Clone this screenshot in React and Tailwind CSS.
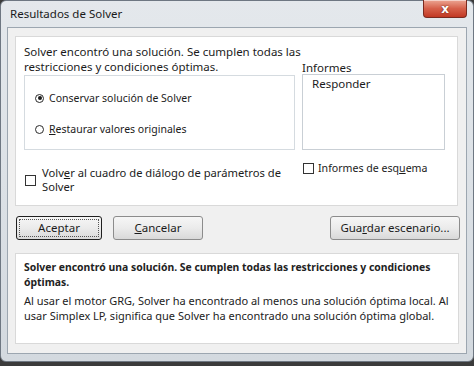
import React from 'react'

const font = { fontFamily: '"Noto Sans", "Open Sans", sans-serif' }

function Radio({ checked }) {
  return (
    <span className="relative inline-flex h-[9px] w-[9px] shrink-0 items-center justify-center rounded-full border border-[#2b2b2b] bg-white">
      {checked ? <span className="h-[4px] w-[4px] rounded-full bg-[#1a1a1a]" /> : null}
    </span>
  )
}

function Checkbox() {
  return <span className="inline-block h-[11px] w-[11px] shrink-0 border border-[#333] bg-white" />
}

function Button({ children, className = '', isDefault = false }) {
  return (
    <div
      className={`flex h-[24px] items-center justify-center rounded-[3px] border bg-gradient-to-b from-[#f6f6f6] via-[#ebebeb] to-[#d9d9d9] text-[11.5px] text-[#1b1b1b] ${
        isDefault ? 'border-[#1f1f1f] p-[2px]' : 'border-[#8c8c8c]'
      } ${className}`}
    >
      {isDefault ? (
        <div className="flex h-full w-full items-center justify-center border border-dotted border-[#555]">{children}</div>
      ) : (
        children
      )}
    </div>
  )
}

export default function App() {
  return (
    <div className="h-[366px] w-[474px] overflow-hidden bg-[#3b3b3b] text-[#1b1b1b]" style={font}>
      <div className="flex h-[362px] w-[474px] flex-col rounded-[6px] border border-[#6e7782] bg-gradient-to-b from-[#e4e8ec] via-[#dce1e6] to-[#d3d9df] px-[6px] pb-[7px]">
        {/* title bar */}
        <div className="flex h-[26px] shrink-0 items-start justify-between">
          <span className="pl-[3px] pt-[6px] text-[11.5px] leading-[14px] text-[#1a1a1a]">Resultados de Solver</span>
          <div className="-mt-px flex h-[18px] w-[44px] items-center justify-center rounded-b-[4px] border border-t-0 border-[#7a2a1f] bg-gradient-to-b from-[#eba593] via-[#d6604a] to-[#c13823] shadow-[inset_0_1px_0_rgba(255,255,255,0.5)]">
            <span className="text-[12px] font-bold leading-none text-white [text-shadow:0_0_2px_#5a1a10]" style={{ fontFamily: '"DejaVu Sans", sans-serif' }}>
              x
            </span>
          </div>
        </div>

        {/* client area */}
        <div className="flex flex-1 flex-col border border-[#9ca6b0] bg-[#f0f0f0] px-[7px] pt-[8px]">
          {/* upper white panel */}
          <div className="flex h-[170px] w-[443px] flex-col border border-[#d9d9d9] bg-white pl-[8px] pt-[7px]">
            <div className="flex items-end">
              <div className="w-[271px]">
                <p className="text-[11.5px] leading-[15px] whitespace-nowrap">
                  Solver encontró una solución. Se cumplen todas las
                  <br />
                  restricciones y condiciones óptimas.
                </p>
                <div className="mt-px flex h-[75px] flex-col border border-[#d5dbe0] pl-[10px] pt-[15px]">
                  <div className="flex items-center gap-[5px] text-[10.5px] leading-[14px]">
                    <Radio checked />
                    <span>Conservar solución de Solver</span>
                  </div>
                  <div className="mt-[17px] flex items-center gap-[5px] text-[10.5px] leading-[14px]">
                    <Radio />
                    <span>
                      <span className="underline">R</span>estaurar valores originales
                    </span>
                  </div>
                </div>
              </div>
              <div className="ml-[7px] w-[143px]">
                <div className="text-[11.5px] leading-[15px]">Informes</div>
                <div className="mt-[-1px] h-[76px] border border-[#c9cfd5] pl-[9px] pt-[1px] text-[11.5px] leading-[15px]">
                  Responder
                </div>
              </div>
            </div>
            <div className="flex items-start">
              <div className="mt-[16px] flex w-[271px] items-center gap-[6px] pl-px">
                <Checkbox />
                <span className="w-[250px] text-[11.2px] leading-[14px]">
                  Volv<span className="underline">e</span>r al cuadro de diálogo de parámetros de
                  <br />
                  Solver
                </span>
              </div>
              <div className="ml-[8px] mt-[11px] flex items-center gap-[4px]">
                <Checkbox />
                <span className="text-[10.6px] leading-[15px]">
                  Informes de esq<span className="underline">u</span>ema
                </span>
              </div>
            </div>
          </div>

          {/* buttons */}
          <div className="mt-[10px] flex items-center pl-px">
            <Button isDefault className="w-[86px]">
              Aceptar
            </Button>
            <Button className="ml-[11px] w-[90px]">
              <span>
                <span className="underline">C</span>ancelar
              </span>
            </Button>
            <Button className="-mr-[1px] ml-auto w-[130px]">
              <span>
                Gua<span className="underline">r</span>dar escenario...
              </span>
            </Button>
          </div>

          {/* bottom message panel */}
          <div className="mt-[13px] h-[91px] w-[444px] border border-[#d9d9d9] bg-white pl-[8px] pt-[6px] text-[11px] leading-[15px] text-[#222]">
            <p className="text-[10.4px] font-bold whitespace-nowrap">
              Solver encontró una solución. Se cumplen todas las restricciones y condiciones
              <br />
              óptimas.
            </p>
            <p className="mt-[3px] whitespace-nowrap">
              Al usar el motor GRG, Solver ha encontrado al menos una solución óptima local. Al
              <br />
              usar Simplex LP, significa que Solver ha encontrado una solución óptima global.
            </p>
          </div>
        </div>
      </div>
    </div>
  )
}
